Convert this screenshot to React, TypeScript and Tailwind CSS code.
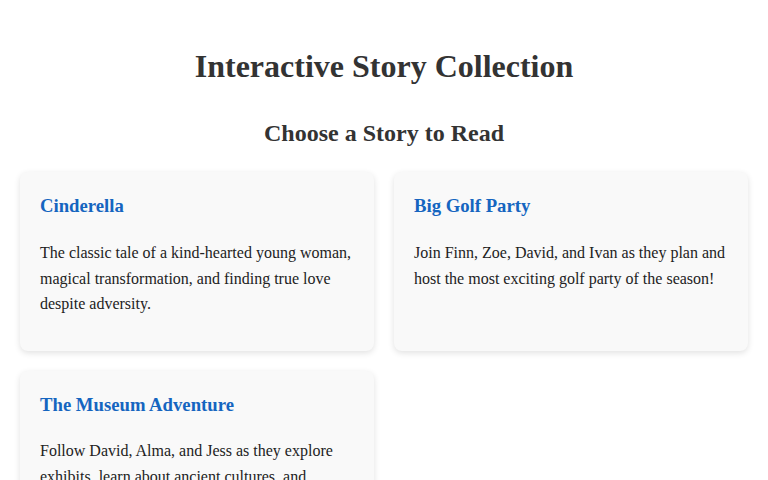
import React from "react";

const stories = [
  {
    title: "Cinderella",
    desc: "The classic tale of a kind-hearted young woman, magical transformation, and finding true love despite adversity.",
  },
  {
    title: "Big Golf Party",
    desc: "Join Finn, Zoe, David, and Ivan as they plan and host the most exciting golf party of the season!",
  },
  {
    title: "The Museum Adventure",
    desc: "Follow David, Alma, and Jess as they explore exhibits, learn about ancient cultures, and discover the wonders of history.",
  },
];

export default function App() {
  return (
    <div
      className="min-h-screen bg-white p-5 text-[#333] leading-[1.6]"
      style={{ fontFamily: '"Liberation Serif", "Times New Roman", serif' }}
    >
      <h1 className="mt-[21.44px] mb-[21.44px] text-center text-[32px] font-bold text-[#333]">
        Interactive Story Collection
      </h1>
      <h2 className="mt-[21.44px] mb-[19.92px] text-center text-[24px] font-bold text-[#333]">
        Choose a Story to Read
      </h2>
      <div className="grid grid-cols-2 gap-5">
        {stories.map((s) => (
          <div
            key={s.title}
            className="rounded-lg bg-[#f9f9f9] px-5 pt-[19px] pb-[34px] shadow-[0_2px_6px_rgba(0,0,0,0.12)]"
          >
            <h3 className="mb-[18.72px] text-[18.72px] font-bold text-[#1565c0]">
              {s.title}
            </h3>
            <p className="text-[16px] text-[#222]">{s.desc}</p>
          </div>
        ))}
      </div>
    </div>
  );
}
